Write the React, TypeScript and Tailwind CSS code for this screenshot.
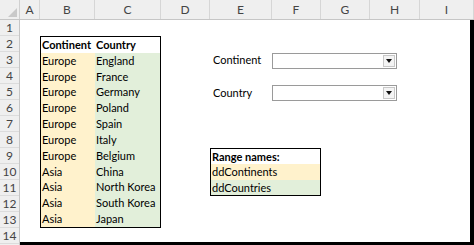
const cols = ['A', 'B', 'C', 'D', 'E', 'F', 'G', 'H', 'I']

const rows = [
  ['Europe', 'England'],
  ['Europe', 'France'],
  ['Europe', 'Germany'],
  ['Europe', 'Poland'],
  ['Europe', 'Spain'],
  ['Europe', 'Italy'],
  ['Europe', 'Belgium'],
  ['Asia', 'China'],
  ['Asia', 'North Korea'],
  ['Asia', 'South Korea'],
  ['Asia', 'Japan'],
]

function Dropdown() {
  return (
    <div className="flex h-[16px] w-[125px] border border-[#9a9a9a] bg-white">
      <div className="flex-1" />
      <div className="m-[1px] flex w-[12px] items-center justify-center border border-[#c8c8c8] bg-[#f4f4f4]">
        <svg width="6" height="4" viewBox="0 0 6 4">
          <path d="M0 0H6L3 4Z" fill="#111" />
        </svg>
      </div>
    </div>
  )
}

export default function App() {
  return (
    <div
      className="flex h-[245px] w-[474px] flex-col overflow-hidden bg-white text-[11px] text-black"
      style={{ fontFamily: 'Lato, "Open Sans", sans-serif' }}
    >
      {/* column headers */}
      <div className="flex h-[20px] shrink-0 border-b border-[#c6c6c6] bg-[#efefef] text-[12px] text-[#444]">
        <div className="relative w-[20px] border-r border-[#d0d0d0]">
          <svg className="absolute right-[2px] bottom-[2px]" width="9" height="9" viewBox="0 0 9 9">
            <path d="M9 0V9H0Z" fill="#c9c9c9" />
          </svg>
        </div>
        <div className="grid flex-1 grid-cols-[20px_55px_66px_49px_62px_49px_49px_50px_54px]">
          {cols.map((c) => (
            <div key={c} className="flex items-center justify-center border-r border-[#d6d6d6]">
              {c}
            </div>
          ))}
        </div>
      </div>

      <div className="flex min-h-0 flex-1">
        {/* row headers */}
        <div className="flex w-[20px] shrink-0 flex-col overflow-hidden border-r border-[#c6c6c6] bg-[#efefef] text-[12px] text-[#444]">
          {Array.from({ length: 14 }, (_, i) => (
            <div key={i} className="flex h-[16px] shrink-0 items-center justify-center border-b border-[#dcdcdc]">
              {i + 1}
            </div>
          ))}
        </div>

        {/* cells */}
        <div className="flex min-h-0 flex-1 flex-col">
          <div className="flex min-h-0 flex-1 overflow-hidden">
            <div className="grid flex-1 grid-cols-[20px_55px_66px_49px_62px_49px_49px_50px_50px] grid-rows-[repeat(14,16px)] leading-[15px]">
              {/* data table */}
              <div className="col-start-2 col-end-4 row-start-2 row-end-14 grid grid-cols-[54px_1fr] grid-rows-[repeat(12,1fr)] border-[1.5px] border-black">
                <div className="bg-white pl-[1px] font-bold">Continent</div>
                <div className="bg-white pl-[1px] font-bold">Country</div>
                {rows.map(([a, b], i) => (
                  <div key={i} className="contents">
                    <div className="bg-[#fff2cc] pl-[1px]">{a}</div>
                    <div className="bg-[#e2efda] pl-[1px]">{b}</div>
                  </div>
                ))}
              </div>

              {/* form controls */}
              <div className="col-start-5 row-start-3 pl-[3px] leading-[16px]">Continent</div>
              <div className="col-start-6 col-end-9 row-start-3 pt-[1px]">
                <Dropdown />
              </div>
              <div className="col-start-5 row-start-5 pl-[3px] pt-[1px] leading-[16px]">Country</div>
              <div className="col-start-6 col-end-9 row-start-5 pt-[1px]">
                <Dropdown />
              </div>

              {/* range names */}
              <div className="col-start-5 col-end-7 row-start-9 row-end-12 grid grid-rows-3 border-[1.5px] border-black">
                <div className="bg-white pl-[1px] font-bold">Range names:</div>
                <div className="bg-[#fff2cc] pl-[1px]">ddContinents</div>
                <div className="bg-[#e2efda] pl-[1px]">ddCountries</div>
              </div>
            </div>
            <div className="w-[4px] bg-black" />
          </div>
          <div className="h-[3px] shrink-0 bg-black" />
        </div>
      </div>
    </div>
  )
}
